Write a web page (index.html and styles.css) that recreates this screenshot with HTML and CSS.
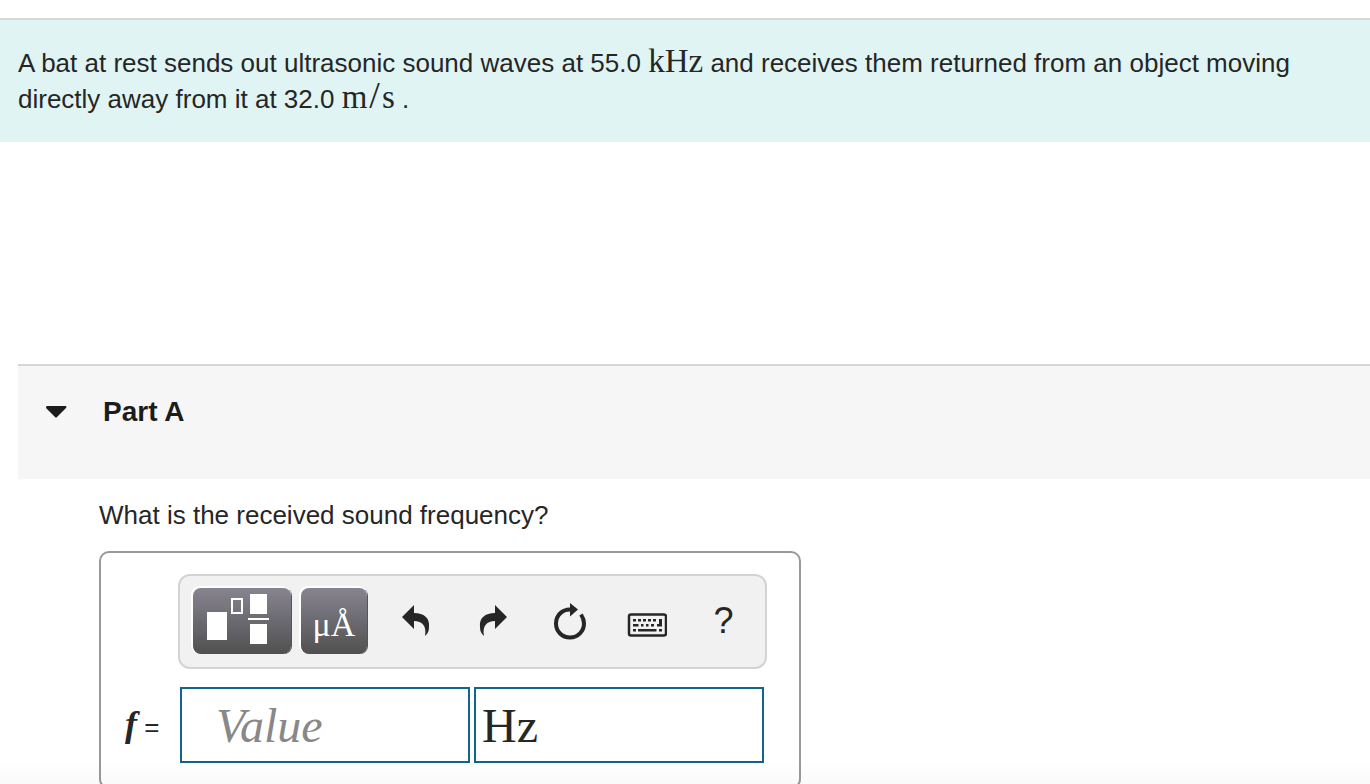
FILE: index.html
```
<!DOCTYPE html>
<html lang="en">
<head>
    <meta charset="UTF-8">
    <meta name="viewport" content="width=device-width, initial-scale=1.0">
    <title>Part A</title>
    <link rel="stylesheet" href="styles.css">
</head>
<body>
    <div class="problem">
        <p>A bat at rest sends out ultrasonic sound waves at 55.0 <span class="unit">kHz</span> and receives them returned from an object moving directly away from it at 32.0 <span class="unit">m<span class="slash">/</span>s</span> .</p>
    </div>

    <section class="part">
        <div class="part-header">
            <button class="toggle" type="button" aria-label="Collapse Part A">
                <svg width="22" height="12" viewBox="0 0 22 12"><path d="M1 0h19q1 1 0 2l-9 9q-1 1-2 0L0 2q0-2 1-2z" fill="#1c1c1c"/></svg>
            </button>
            <h2>Part A</h2>
        </div>

        <div class="part-body">
            <p class="question">What is the received sound frequency?</p>

            <form class="answer">
                <div class="toolbar">
                    <button class="tool dark templates" type="button" aria-label="Templates">
                        <svg width="98" height="66" viewBox="0 0 98 66">
                            <path d="M14 24h20v28H14zM57 6h17v20H57zM57 36h17v20H57zM55 30h21v2H55z" fill="#fff"/>
                            <path d="M39 11h10v14H39z" fill="none" stroke="#fff" stroke-width="2"/>
                        </svg>
                    </button>
                    <button class="tool dark symbols" type="button" aria-label="Symbols">μÅ</button>
                    <button class="tool" type="button" aria-label="Undo">
                        <svg width="34" height="36" viewBox="0 0 34 36"><path d="M3 14L15 2v8c10 0 16 5 15 14 0 4-1 6-4 9 2-10-3-15-11-15v8z" fill="#262626"/></svg>
                    </button>
                    <button class="tool" type="button" aria-label="Redo">
                        <svg width="34" height="36" viewBox="0 0 34 36"><path d="M31 14L19 2v8C9 10 3 15 4 24c0 4 1 6 4 9-2-10 3-15 11-15v8z" fill="#262626"/></svg>
                    </button>
                    <button class="tool" type="button" aria-label="Reset">
                        <svg width="36" height="40" viewBox="0 0 36 40">
                            <path d="M18 8.500C10 8.500 4 14.500 4 22.500S10 36.500 18 36.500 32 30 32 22.500C32 19 31 16.500 29 13.500" fill="none" stroke="#262626" stroke-width="4"/>
                            <path d="M18 2l8 6.500-8 7z" fill="#262626"/>
                        </svg>
                    </button>
                    <button class="tool keyboard" type="button" aria-label="Keyboard shortcuts">
                        <svg width="40" height="24" viewBox="0 0 40 24">
                            <rect x="2" y="1.500" width="37" height="21" rx="2" fill="none" stroke="#262626" stroke-width="2.500"/>
                            <path d="M6 6h3v2.500H6zM11 6h3v2.500h-3zM16 6h3v2.500h-3zM21 6h3v2.500h-3zM26 6h3v2.500h-3zM32 6h3v7.500h-5V11h2zM6 11h5.500v2.500H6zM14 11h2.500v2.500H14zM19 11h2.500v2.500H19zM24 11h3v2.500h-3zM6 16h3v2.500H6zM11 16h18.500v2.500H11zM32 16h3v2.500h-3z" fill="#262626"/>
                        </svg>
                    </button>
                    <button class="tool help" type="button" aria-label="Help">?</button>
                </div>

                <label class="variable" for="value"><i>f</i> =</label>
                <div class="fields">
                    <input type="text" id="value" placeholder="Value" aria-label="Value">
                    <input type="text" id="units" class="units" value="Hz" aria-label="Units">
                </div>
            </form>
        </div>
    </section>
</body>
</html>
```
FILE: styles.css
```
* {
    box-sizing: border-box;
}
body {
    margin: 0;
    padding-top: 18px;
    height: 100vh;
    overflow: hidden;
    font-family: "Liberation Sans", Arial, sans-serif;
    font-size: 26px;
    line-height: 36px;
    color: #262626;
    background-color: #fff;
}
/* soft fade along the bottom edge of the window */
body::after {
    content: "";
    position: fixed;
    left: 0;
    right: 0;
    bottom: 0;
    height: 24px;
    background: linear-gradient(rgba(0, 0, 0, 0), rgba(0, 0, 0, 0.02));
    pointer-events: none;
}
p, h2 {
    margin: 0;
}
button {
    padding: 0;
    border: none;
    background: none;
    color: #262626;
    font-family: inherit;
    cursor: pointer;
}
svg {
    display: block;
}
.problem {
    padding: 25px 18px;
    border-top: 2px solid #d6d6d6;
    background-color: #e0f5f3;
}
.unit {
    font-family: "Liberation Serif", "Times New Roman", serif;
    font-size: 33px;
    line-height: 1;
}
.slash {
    margin: 0 2px;
    font-size: 38px;
    line-height: 0;
}
.part {
    margin: 222px 0 0 18px;
}
.part-header {
    display: flex;
    align-items: flex-start;
    gap: 35px;
    height: 115px;
    padding: 28px;
    border-top: 2px solid #d6d6d6;
    background-color: #f6f6f6;
}
.toggle {
    padding: 12px 0;
}
.part-header h2 {
    font-size: 28px;
    color: #1c1c1c;
}
.part-body {
    padding: 18px 81px;
}
.answer {
    display: grid;
    grid-template-columns: 55px 589px;
    gap: 18px 22px;
    align-items: center;
    width: 702px;
    margin-top: 18px;
    padding: 21px 0 24px;
    border: 2px solid #999;
    border-radius: 10px;
}
.toolbar {
    grid-column: 2;
    display: flex;
    align-items: flex-start;
    height: 95px;
    padding: 12px 0 0 13px;
    border: 2px solid #d3d3d3;
    border-radius: 12px;
    background-color: #f1f1f1;
}
.tool {
    display: flex;
    flex-shrink: 0;
    align-items: center;
    justify-content: center;
    width: 77px;
    height: 66px;
}
.dark {
    border-radius: 8px;
    background: linear-gradient(#878490, #505050);
    box-shadow: -1px -1px 0 1px #fff, 1px 0 0 #555;
    color: #fff;
}
.templates {
    width: 98px;
    margin-right: 10px;
}
.symbols {
    width: 66px;
    margin-right: 10px;
    padding-top: 8px;
    font-family: "Liberation Serif", "Times New Roman", serif;
    font-size: 34px;
}
.keyboard {
    padding-top: 8px;
}
.help {
    font-size: 36px;
}
.variable {
    padding-left: 24px;
    white-space: nowrap;
}
.variable i {
    font-family: "Liberation Serif", "Times New Roman", serif;
    font-size: 36px;
    line-height: 1;
    font-weight: bold;
}
.fields {
    display: flex;
    gap: 4px;
    padding: 0 2px;
}
.fields input {
    width: 290px;
    height: 76px;
    padding: 0 34px;
    border: 2px solid #11658a;
    border-radius: 0;
    background-color: #fff;
    color: #262626;
    font-family: "Liberation Serif", "Times New Roman", serif;
    font-size: 48px;
}
.fields input::placeholder {
    color: #888;
    font-style: italic;
}
.fields .units {
    padding: 0 6px;
}
```
